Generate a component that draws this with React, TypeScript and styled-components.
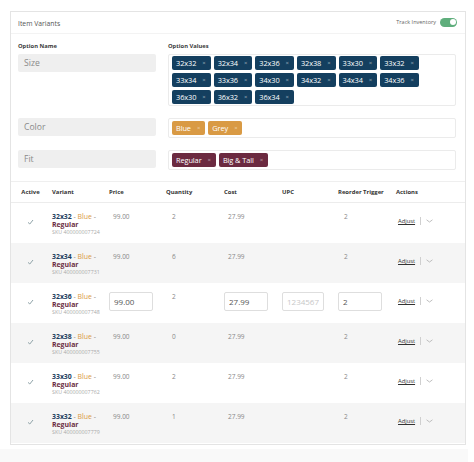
import styled, { createGlobalStyle } from "styled-components";

const GlobalStyle = createGlobalStyle`
  body {
    margin: 0;
    background: #ffffff;
    font-family: "Open Sans", "Liberation Sans", sans-serif;
  }
`;

type TagKind = "size" | "color" | "fit";

const sizes = [
  "32x32", "32x34", "32x36", "32x38", "33x30", "33x32",
  "33x34", "33x36", "34x30", "34x32", "34x34", "34x36",
  "36x30", "36x32", "36x34",
];

const variants = [
  { size: "32x32", sku: "400000007724", qty: "2", editing: false },
  { size: "32x34", sku: "400000007731", qty: "6", editing: false },
  { size: "32x36", sku: "400000007748", qty: "2", editing: true },
  { size: "32x38", sku: "400000007755", qty: "0", editing: false },
  { size: "33x30", sku: "400000007762", qty: "2", editing: false },
  { size: "33x32", sku: "400000007779", qty: "1", editing: false },
];

const Check = () => (
  <svg width="7" height="6" viewBox="0 0 7 6">
    <polyline points="1,3.4 2.8,5 6,1" fill="none" stroke="#8fa3a8" strokeWidth="1" />
  </svg>
);

const Chevron = () => (
  <svg width="7" height="4" viewBox="0 0 7 4">
    <polyline points="0.5,0.8 3.5,3 6.5,0.8" fill="none" stroke="#b8b8b8" strokeWidth="0.9" />
  </svg>
);

const Tag = ({ kind, label }: { kind: TagKind; label: string }) => (
  <TagBox $kind={kind}>
    {label}
    <TagX>×</TagX>
  </TagBox>
);

export default function App() {
  return (
    <>
      <GlobalStyle />
      <Page>
        <Card>
          <Header>
            <Title>Item Variants</Title>
            <Track>
              Track Inventory
              <Toggle />
            </Track>
          </Header>

          <Options>
            <Label>Option Name</Label>
            <Label>Option Values</Label>

            <NameBox>Size</NameBox>
            <ValuesBox $tall>
              {sizes.map((s) => (
                <Tag key={s} kind="size" label={s} />
              ))}
            </ValuesBox>

            <NameBox>Color</NameBox>
            <ValuesBox>
              <Tag kind="color" label="Blue" />
              <Tag kind="color" label="Grey" />
            </ValuesBox>

            <NameBox>Fit</NameBox>
            <ValuesBox>
              <Tag kind="fit" label="Regular" />
              <Tag kind="fit" label="Big & Tall" />
            </ValuesBox>
          </Options>

          <Table>
            <HeadRow>
              <HeadCell $center>Active</HeadCell>
              <HeadCell>Variant</HeadCell>
              <HeadCell>Price</HeadCell>
              <HeadCell>Quantity</HeadCell>
              <HeadCell>Cost</HeadCell>
              <HeadCell>UPC</HeadCell>
              <HeadCell>Reorder Trigger</HeadCell>
              <HeadCell>Actions</HeadCell>
            </HeadRow>

            {variants.map((v, i) => (
              <Row key={v.sku} $shaded={i % 2 === 1}>
                <CheckCell>
                  <Check />
                </CheckCell>
                <VariantCell>
                  <SizeText>{v.size}</SizeText>
                  <Dash> - </Dash>
                  <ColorText>Blue</ColorText>
                  <Dash> -</Dash>
                  <br />
                  <FitText>Regular</FitText>
                  <Sku>SKU {v.sku}</Sku>
                </VariantCell>
                {v.editing ? (
                  <>
                    <InputCell>
                      <Field defaultValue="99.00" />
                    </InputCell>
                    <ValueCell $pad={8}>{v.qty}</ValueCell>
                    <InputCell>
                      <Field defaultValue="27.99" />
                    </InputCell>
                    <InputCell>
                      <Field $narrow placeholder="1234567" />
                    </InputCell>
                    <InputCell>
                      <Field defaultValue="2" />
                    </InputCell>
                  </>
                ) : (
                  <>
                    <ValueCell>99.00</ValueCell>
                    <ValueCell $pad={8}>{v.qty}</ValueCell>
                    <ValueCell>27.99</ValueCell>
                    <ValueCell />
                    <ValueCell $pad={8}>2</ValueCell>
                  </>
                )}
                <ActionsCell>
                  <AdjustLink>Adjust</AdjustLink>
                  <Divider />
                  <Chevron />
                </ActionsCell>
              </Row>
            ))}
          </Table>
        </Card>
        <Footer />
      </Page>
    </>
  );
}

const Page = styled.div`
  padding: 11px 8px 0 10px;
  width: 474px;
  height: 462px;
  box-sizing: border-box;
  display: flex;
  flex-direction: column;
  gap: 4px;
`;

const Card = styled.div`
  width: 456px;
  box-sizing: border-box;
  border: 1px solid #e4e4e4;
  background: #fff;
  padding-bottom: 1px;
`;

const Footer = styled.div`
  height: 15px;
  background: #f9f9f9;
  margin-left: -10px;
  width: 468px;
`;

const Header = styled.div`
  height: 20px;
  display: flex;
  align-items: center;
  justify-content: space-between;
  padding: 1px 8px 0 7px;
  border-bottom: 1px solid #f3f3f3;
`;

const Title = styled.span`
  font-size: 6.8px;
  color: #555;
`;

const Track = styled.span`
  display: flex;
  align-items: center;
  gap: 4px;
  font-size: 5.5px;
  color: #666;
  margin-top: -2px;
`;

const Toggle = styled.span`
  position: relative;
  width: 17px;
  height: 9px;
  border-radius: 5px;
  background: #5fae7c;

  &::after {
    content: "";
    position: absolute;
    right: 1.5px;
    top: 1.5px;
    width: 6px;
    height: 6px;
    border-radius: 50%;
    background: #fff;
  }
`;

const Options = styled.div`
  display: grid;
  grid-template-columns: 138px 288px;
  column-gap: 12px;
  row-gap: 12px;
  padding: 8px 9px 11px 7px;

  & > :nth-child(1),
  & > :nth-child(2) {
    margin-bottom: -11px;
  }
`;

const Label = styled.div`
  font-size: 5.8px;
  font-weight: 700;
  color: #3a3a3a;
  line-height: 8px;
`;

const NameBox = styled.div`
  height: 18px;
  background: #efefef;
  border-radius: 2px;
  font-size: 8.6px;
  color: #8a8a8a;
  line-height: 18px;
  padding-left: 6px;
`;

const ValuesBox = styled.div<{ $tall?: boolean }>`
  display: flex;
  flex-wrap: wrap;
  align-content: flex-start;
  gap: 3px 3px;
  min-height: ${(p) => (p.$tall ? "52px" : "18px")};
  box-sizing: border-box;
  padding: ${(p) => (p.$tall ? "1px 3px" : "2px 3px")};
  border: 1px solid #ebebeb;
  border-radius: 2px;
  background: #fff;
`;

const tagColors: Record<TagKind, string> = {
  size: "#143f5f",
  color: "#d99a44",
  fit: "#6b2a40",
};

const TagBox = styled.span<{ $kind: TagKind }>`
  display: inline-flex;
  align-items: center;
  gap: 6px;
  height: 14px;
  padding: 0 5px 0 4px;
  border-radius: 2px;
  background: ${(p) => tagColors[p.$kind]};
  color: #fff;
  font-size: 7.4px;
  letter-spacing: -0.1px;
`;

const TagX = styled.span`
  font-size: 6px;
  color: rgba(255, 255, 255, 0.55);
`;

const Table = styled.div`
  border-top: 1px solid #efefef;
`;

const columns = "39px 57px 57px 58px 58px 56px 58px 1fr";

const HeadRow = styled.div`
  display: grid;
  grid-template-columns: ${columns};
  height: 20px;
  align-items: center;
  border-bottom: 1px solid #ececec;
`;

const HeadCell = styled.div<{ $center?: boolean }>`
  font-size: 5.9px;
  font-weight: 700;
  color: #333;
  padding-left: ${(p) => (p.$center ? "0" : "2px")};
  text-align: ${(p) => (p.$center ? "center" : "left")};
`;

const Row = styled.div<{ $shaded: boolean }>`
  display: grid;
  grid-template-columns: ${columns};
  height: 40px;
  background: ${(p) => (p.$shaded ? "#f5f5f5" : "#fff")};
`;

const CheckCell = styled.div`
  display: flex;
  justify-content: center;
  padding-top: 16px;
`;

const VariantCell = styled.div`
  padding: 10px 0 0 2px;
  font-size: 6.9px;
  line-height: 8px;
  white-space: nowrap;
`;

const SizeText = styled.span`
  font-weight: 700;
  color: #1d3e5e;
`;

const Dash = styled.span`
  color: #888;
  white-space: pre;
`;

const ColorText = styled.span`
  color: #d99a44;
`;

const FitText = styled.span`
  font-weight: 700;
  color: #6b2d42;
`;

const Sku = styled.div`
  font-size: 5.3px;
  line-height: 7px;
  color: #aaa;
`;

const ValueCell = styled.div<{ $pad?: number }>`
  padding: 10px 0 0 ${(p) => p.$pad ?? 6}px;
  font-size: 6.5px;
  line-height: 8px;
  color: #888;
`;

const InputCell = styled.div`
  padding: 5px 0 0 2px;
`;

const Field = styled.input<{ $narrow?: boolean }>`
  width: ${(p) => (p.$narrow ? "42px" : "44px")};
  height: 19px;
  box-sizing: border-box;
  border: 1px solid #dedede;
  border-radius: 2px;
  padding: 0 4px;
  font-family: "Open Sans", "Liberation Sans", sans-serif;
  font-size: 8px;
  color: #555;
  background: #fff;
  outline: none;

  &::placeholder {
    color: #c8c8c8;
  }
`;

const ActionsCell = styled.div`
  display: flex;
  align-items: center;
  gap: 5px;
  padding: 14px 0 0 4px;
  height: 8px;
`;

const AdjustLink = styled.span`
  font-size: 5.8px;
  color: #333;
  text-decoration: underline;
`;

const Divider = styled.span`
  width: 1px;
  height: 8px;
  background: #cfcfcf;
`;
